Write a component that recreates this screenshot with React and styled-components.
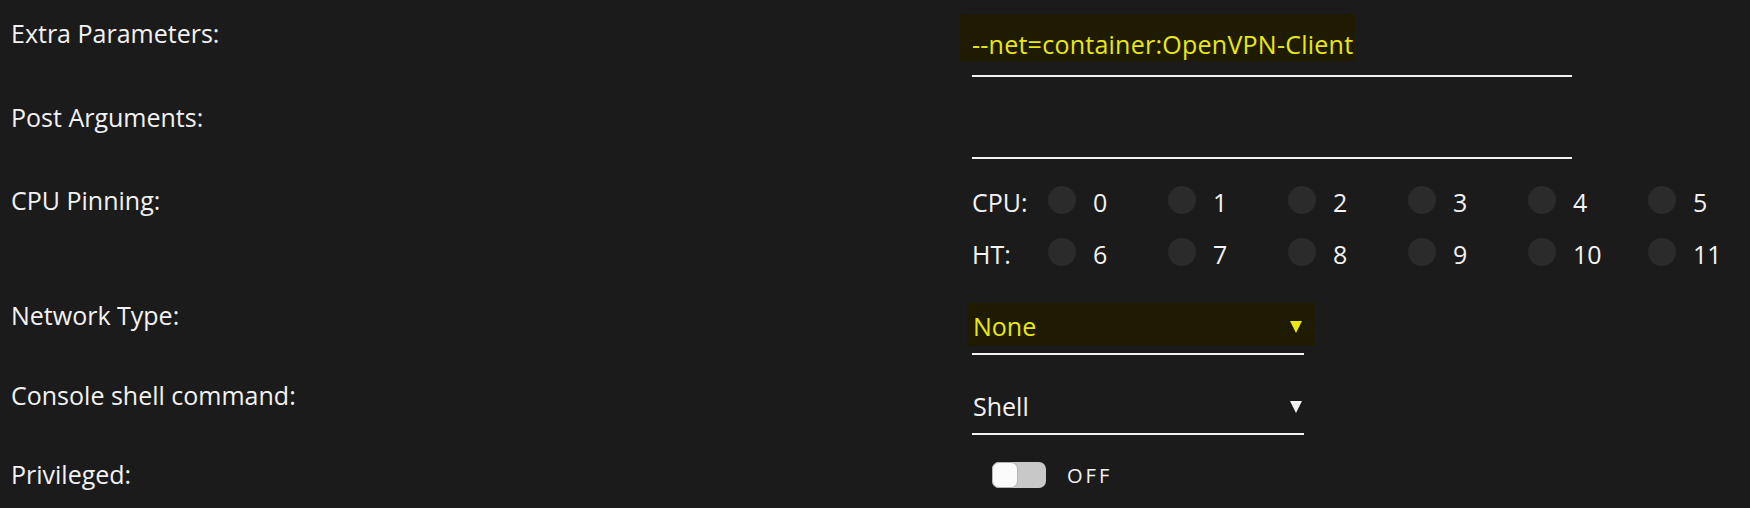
import React from "react";
import styled, { createGlobalStyle } from "styled-components";

const GlobalStyle = createGlobalStyle`
  html, body {
    margin: 0;
    padding: 0;
    background: #1c1b1c;
  }
  body {
    font-family: "Open Sans", "Noto Sans", sans-serif;
    font-size: 25px;
    color: #f2f2f2;
  }
`;

const Page = styled.div`
  width: 1750px;
  height: 508px;
  background: #1c1b1c;
  overflow: hidden;
`;

const Row = styled.div`
  display: flex;
  align-items: flex-start;
  height: ${(p) => p.$h}px;
`;

const Label = styled.div`
  width: 972px;
  padding: 15px 0 0 11px;
  line-height: 36px;
  flex: none;
  box-sizing: border-box;
`;

const Field = styled.div`
  flex: 1;
`;

const Input = styled.div`
  display: flex;
  flex-direction: column;
  align-items: flex-start;
  width: 600px;
  min-height: 47px;
  padding: ${(p) => p.$top}px 0 14px;
  border-bottom: 2px solid #f2f2f2;
`;

const Highlight = styled.div`
  margin-left: -12px;
  padding: 14px 2px 0 12px;
  line-height: 33px;
  letter-spacing: 0.25px;
  white-space: nowrap;
  background: #1e1b00;
  color: #e8e814;
`;

const Pinning = styled.div`
  display: grid;
  grid-template-columns: 76px repeat(6, 120px);
  row-gap: 19px;
  padding-top: 16px;
  align-items: center;
`;

const PinLabel = styled.span`
  line-height: 28px;
  padding-top: 5px;
`;

const Cell = styled.div`
  display: flex;
  align-items: center;
  gap: 17px;
`;

const Dot = styled.span`
  width: 28px;
  height: 28px;
  border-radius: 50%;
  background: #2b2b2b;
  flex: none;
`;

const Num = styled.span`
  line-height: 28px;
  padding-top: 5px;
`;

const Select = styled.div`
  width: 332px;
  padding-top: 21px;
  padding-bottom: 7px;
  border-bottom: 2px solid #f2f2f2;
`;

const SelectFace = styled.div`
  display: flex;
  align-items: center;
  justify-content: space-between;
  height: 43px;
  box-sizing: border-box;
  margin: 0 -11px 0 -5px;
  padding: 5px 13px 2px 6px;
  line-height: 36px;
  background: ${(p) => (p.$active ? "#1e1b00" : "transparent")};
  color: ${(p) => (p.$active ? "#e8e814" : "#f2f2f2")};
`;

const Caret = styled.span`
  width: 0;
  height: 0;
  margin-top: 2px;
  border-left: 6px solid transparent;
  border-right: 6px solid transparent;
  border-top: 12px solid ${(p) => (p.$active ? "#e8e814" : "#f2f2f2")};
`;

const SwitchRow = styled.div`
  display: flex;
  align-items: center;
  gap: 21px;
  padding: 20px 0 0 20px;
`;

const Switch = styled.span`
  position: relative;
  width: 54px;
  height: 26px;
  border-radius: 7px;
  background: #c8c8c8;
  box-sizing: border-box;
`;

const Knob = styled.span`
  position: absolute;
  left: 0;
  top: 0;
  width: 26px;
  height: 26px;
  border-radius: 7px;
  background: #fbfbfb;
  border: 1px solid #b5b5b5;
  box-sizing: border-box;
`;

const SwitchText = styled.span`
  font-size: 20px;
  letter-spacing: 3px;
  line-height: 26px;
  padding-top: 2px;
`;

const cpu = [0, 1, 2, 3, 4, 5];
const ht = [6, 7, 8, 9, 10, 11];

export default function App() {
  return (
    <Page>
      <GlobalStyle />
      <Row $h={84}>
        <Label>Extra Parameters:</Label>
        <Field>
          <Input $top={14}>
            <Highlight>--net=container:OpenVPN-Client</Highlight>
          </Input>
        </Field>
      </Row>
      <Row $h={83}>
        <Label>Post Arguments:</Label>
        <Field>
          <Input $top={12} />
        </Field>
      </Row>
      <Row $h={115}>
        <Label>CPU Pinning:</Label>
        <Field>
          <Pinning>
            <PinLabel>CPU:</PinLabel>
            {cpu.map((n) => (
              <Cell key={n}>
                <Dot />
                <Num>{n}</Num>
              </Cell>
            ))}
            <PinLabel>HT:</PinLabel>
            {ht.map((n) => (
              <Cell key={n}>
                <Dot />
                <Num>{n}</Num>
              </Cell>
            ))}
          </Pinning>
        </Field>
      </Row>
      <Row $h={80}>
        <Label>Network Type:</Label>
        <Field>
          <Select>
            <SelectFace $active>
              <span>None</span>
              <Caret $active />
            </SelectFace>
          </Select>
        </Field>
      </Row>
      <Row $h={79}>
        <Label>Console shell command:</Label>
        <Field>
          <Select>
            <SelectFace>
              <span>Shell</span>
              <Caret />
            </SelectFace>
          </Select>
        </Field>
      </Row>
      <Row $h={67}>
        <Label>Privileged:</Label>
        <Field>
          <SwitchRow>
            <Switch>
              <Knob />
            </Switch>
            <SwitchText>OFF</SwitchText>
          </SwitchRow>
        </Field>
      </Row>
    </Page>
  );
}
